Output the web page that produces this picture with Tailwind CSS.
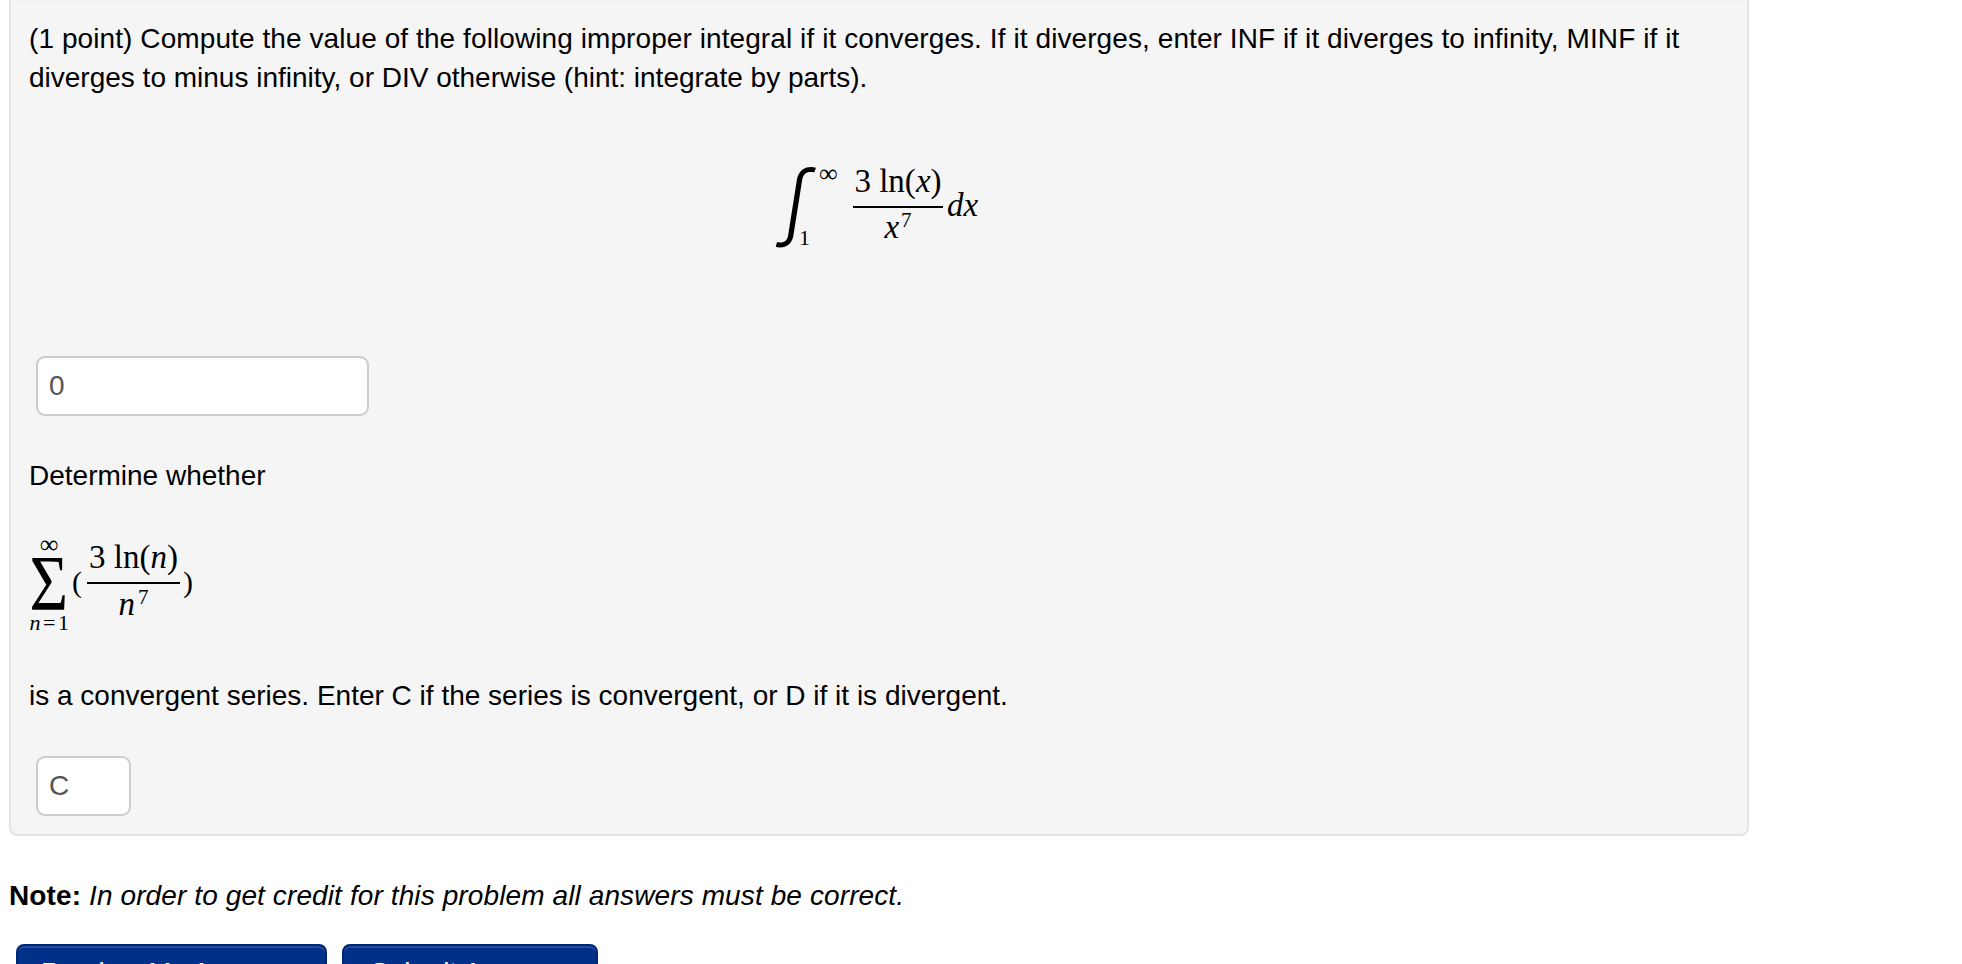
<!DOCTYPE html>
<html lang="en">

<head>
    <meta charset="UTF-8">
    <title>Problem</title>
    <script src="https://cdn.jsdelivr.net/npm/@tailwindcss/browser@4"></script>
</head>

<body class="h-screen overflow-hidden bg-white font-['Liberation_Sans',sans-serif] text-[28px] leading-[39px] text-black">
    <main class="w-[1749px] pl-[9px]">
        <!-- Problem panel -->
        <div class="h-[836px] border-2 border-t border-[#e3e3e3] border-t-[#efefef] rounded-b-lg bg-[#f5f5f5] px-[18px] pt-[18px]">
            <p><span class="tracking-[0.085px]">(1 point) Compute the value of the following improper integral if it converges. If it diverges, enter INF if it diverges to infinity, MINF if it</span><br>diverges to minus infinity, or DIV otherwise (hint: integrate by parts).</p>

            <!-- Integral -->
            <div class="mt-[63px] ml-[749px] h-[90px] flex font-['Liberation_Serif',serif] text-[33px] leading-none">
                <div class="relative w-[75px] h-[90px]">
                    <span class="absolute left-[6px] top-0 text-[80px] leading-[80px] font-['Inter',sans-serif] font-light -skew-x-[9deg]">∫</span>
                    <span class="absolute left-[41px] top-[1px] text-[26px]">∞</span>
                    <span class="absolute left-[21px] top-[67px] text-[22px]">1</span>
                </div>
                <div class="w-[90px] flex flex-col items-center">
                    <span class="h-[46px] pt-[5px] whitespace-nowrap">3 ln(<i>x</i>)</span>
                    <span class="w-full border-t-2 border-black"></span>
                    <span class="pt-[3px]"><i>x</i><sup class="text-[21px] top-[-11px] ml-[2px]">7</sup></span>
                </div>
                <i class="ml-[4px] pt-[29px]">dx</i>
            </div>

            <input type="text" value="0" readonly class="block mt-[106px] ml-[7px] w-[333px] h-[60px] px-[11px] border-2 border-[#ccc] rounded-[9px] bg-white text-[#555]">

            <p class="mt-[40px]">Determine whether</p>

            <!-- Series -->
            <div class="mt-[40px] h-[100px] flex font-['Liberation_Serif',serif] text-[33px] leading-none">
                <div class="w-[40px] flex flex-col items-center">
                    <span class="text-[26px] h-[20px] leading-[20px]">∞</span>
                    <span class="text-[78px] h-[52px] leading-[56px] scale-x-[0.85]">Σ</span>
                    <span class="text-[22px] mt-[5px] ml-[3px] tracking-[2.5px] whitespace-nowrap"><i>n</i>=1</span>
                </div>
                <span class="ml-[3px] pt-[32px] text-[30px]">(</span>
                <div class="ml-[5px] w-[93px] flex flex-col items-center">
                    <span class="h-[47px] pt-[6px] whitespace-nowrap">3 ln(<i>n</i>)</span>
                    <span class="w-full border-t-2 border-black"></span>
                    <span class="pt-[4px]"><i>n</i><sup class="text-[21px] top-[-11px] ml-[3px]">7</sup></span>
                </div>
                <span class="ml-[3px] pt-[32px] text-[30px]">)</span>
            </div>

            <p class="mt-[41px]">is a convergent series. Enter C if the series is convergent, or D if it is divergent.</p>

            <input type="text" value="C" readonly class="block mt-[41px] ml-[7px] w-[95px] h-[60px] px-[11px] border-2 border-[#ccc] rounded-[9px] bg-white text-[#555]">
        </div>

        <p class="mt-[40px] tracking-[0.11px]"><b>Note:</b> <i>In order to get credit for this problem all answers must be correct.</i></p>

        <!-- Buttons -->
        <div class="mt-[29px] ml-[7px] flex gap-[15px]">
            <button class="w-[311px] h-[60px] rounded-[8px] border-2 border-[#00267a] bg-[#003087] shadow-[inset_0_2px_0_rgba(255,255,255,0.15)] text-left pl-[23px] pb-[4px] text-white">Preview My Answers</button>
            <button class="w-[256px] h-[60px] rounded-[8px] border-2 border-[#00267a] bg-[#003087] shadow-[inset_0_2px_0_rgba(255,255,255,0.15)] text-left pl-[26px] pb-[4px] text-white">Submit Answers</button>
        </div>
    </main>
</body>

</html>
